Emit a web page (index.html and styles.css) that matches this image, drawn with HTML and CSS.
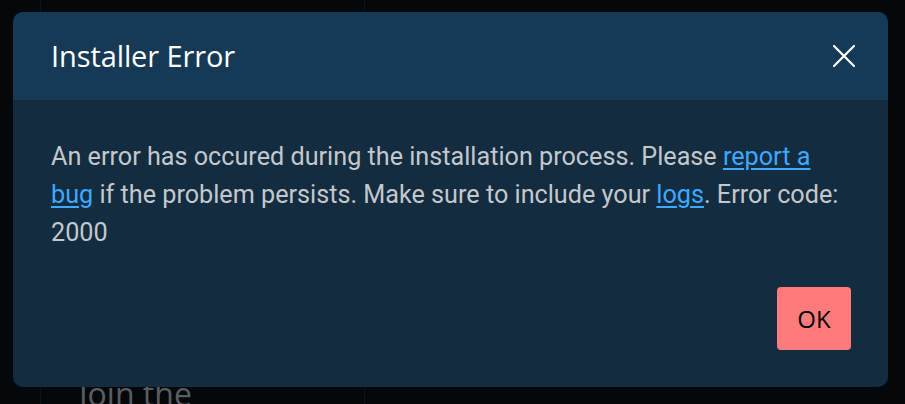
FILE: index.html
```html
<!DOCTYPE html>
<html>
<head>
<meta charset="utf-8">
<link rel="stylesheet" href="styles.css">
</head>
<body>
<div class="page">
  <div class="side">
    <div class="side-title">Join the</div>
  </div>
</div>
<div class="dialog">
  <div class="dialog-head">
    <h1 class="dialog-title">Installer Error</h1>
    <button class="close" aria-label="Close">
      <svg width="24" height="24" viewBox="0 0 24 24"><path d="M2 2 L22 22 M22 2 L2 22" stroke="#fff" stroke-width="2.2" stroke-linecap="round" fill="none"/></svg>
    </button>
  </div>
  <div class="dialog-body">
    <p class="msg">An error has occured during the installation process. Please <a href="#">report a bug</a> if the problem persists. Make sure to include your <a href="#">logs</a>. Error code: 2000</p>
    <div class="actions"><button class="ok">OK</button></div>
  </div>
</div>
</body>
</html>
```
FILE: styles.css
```css
html, body { margin: 0; padding: 0; }
body {
  width: 905px; height: 404px; overflow: hidden;
  background: #04080b;
  font-family: "Roboto", "Liberation Sans", sans-serif;
  position: relative;
}
.page { display: flex; height: 404px; }
.side {
  margin-left: 40px; width: 323px;
  border-left: 1px solid #0d1317; border-right: 1px solid #0d1317;
  display: flex; flex-direction: column; justify-content: flex-end;
}
.side-title {
  padding-left: 38px; margin-bottom: -10px;
  font-family: "Open Sans", sans-serif; font-size: 32px; color: #5b5d60;
  line-height: 40px;
}
.dialog {
  position: absolute; left: 13px; top: 12px;
  width: 875px; height: 375px;
  border-radius: 10px; overflow: hidden;
  background: #132c40;
  display: flex; flex-direction: column;
}
.dialog-head {
  height: 88px; background: #163a55;
  display: flex; align-items: center; justify-content: space-between;
  padding: 0 32px 0 38px;
}
.dialog-title {
  margin: 0; font-family: "Open Sans", sans-serif; font-weight: 400;
  font-size: 29px; color: #fff; letter-spacing: -0.1px;
  position: relative; top: -1px;
}
.close { background: none; border: 0; padding: 0; width: 24px; height: 24px; display: flex; }
.dialog-body {
  flex: 1; display: flex; flex-direction: column;
  padding: 38px 37px 37px 38px;
}
.msg {
  margin: 0; font-size: 25.2px; line-height: 38px; color: #c3c8cc;
}
.msg a { color: #3ea8ff; text-decoration: underline; text-underline-offset: 3px; }
.actions { margin-top: auto; display: flex; justify-content: flex-end; }
.ok {
  width: 74px; height: 63px; border: 0; border-radius: 4px;
  background: #ff7b7b; color: #000;
  font-family: "Open Sans", sans-serif; font-size: 24px;
}
```
